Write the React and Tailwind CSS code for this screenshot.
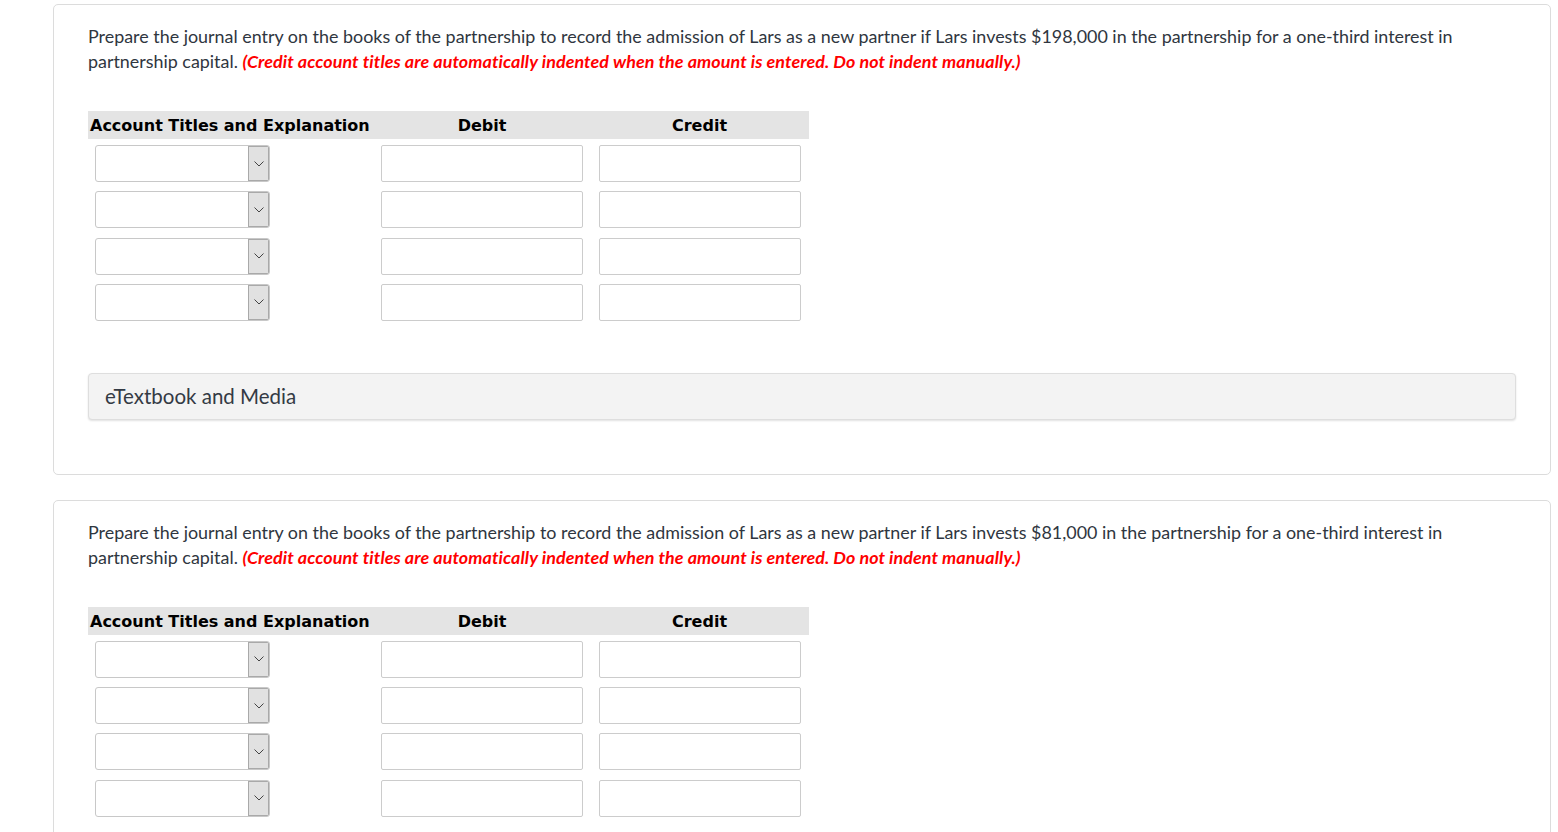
import React from "react";

function Select() {
  return (
    <div className="flex h-[37px] w-[175px] rounded-[3px] border border-[#c8c8c8] bg-white overflow-hidden">
      <div className="flex-1" />
      <div className="flex w-[21px] items-center justify-center border-l border-[#a9a9a9] border-r border-t border-b bg-[#e1e1e1]">
        <svg width="10" height="6" viewBox="0 0 10 6" fill="none">
          <path d="M0.5 0.5 L5 5 L9.5 0.5" stroke="#444" strokeWidth="1" />
        </svg>
      </div>
    </div>
  );
}

function Input() {
  return <div className="h-[37px] w-[202px] rounded-[2px] border border-[#cccccc] bg-white" />;
}

function Table() {
  const rows = [0, 1, 2, 3];
  return (
    <div className="w-[721px]">
      <div className="flex h-[28px] items-center bg-[#e4e4e4] font-['DejaVu_Sans',sans-serif] text-[16px] font-bold text-black">
        <div className="w-[286px] pl-[2px] pt-[2px]">Account Titles and Explanation</div>
        <div className="w-[216px] pt-[2px] text-center">Debit</div>
        <div className="flex-1 pt-[2px] text-center">Credit</div>
      </div>
      <div className="flex flex-col gap-[9.3px] pt-[6px]">
        {rows.map((r) => (
          <div key={r} className="flex items-center">
            <div className="w-[293px] pl-[7px]">
              <Select />
            </div>
            <Input />
            <div className="w-[16px]" />
            <Input />
          </div>
        ))}
      </div>
    </div>
  );
}

function Question({ amount, media }) {
  return (
    <div className="rounded-[5px] border border-[#dcdcdc] bg-white pl-[34px] pr-[34px] pt-[19px] pb-[54px]">
      <p className="font-['Lato',sans-serif] text-[17.9px] leading-[25px] text-[#2f3640]">
        Prepare the journal entry on the books of the partnership to record the admission of Lars as a new partner if Lars invests {amount} in the partnership for a one-third interest in partnership capital.{" "}
        <span className="font-bold italic text-[#ff0000] tracking-[0.08px]">
          (Credit account titles are automatically indented when the amount is entered. Do not indent manually.)
        </span>
      </p>
      <div className="mt-[37px]">
        <Table />
      </div>
      {media && (
        <div className="mt-[52px] flex h-[47px] items-center rounded-[4px] border border-[#dedede] bg-[#f3f3f3] pl-[16px] shadow-[0_1px_2px_rgba(0,0,0,0.12)] font-['Lato',sans-serif] text-[20.5px] text-[#333a44]">
          eTextbook and Media
        </div>
      )}
    </div>
  );
}

export default function App() {
  return (
    <div className="h-[832px] overflow-hidden bg-white">
      <div className="flex flex-col gap-[25px] pl-[53px] pr-[7px] pt-[4px]">
        <Question amount="$198,000" media />
        <Question amount="$81,000" />
      </div>
    </div>
  );
}
